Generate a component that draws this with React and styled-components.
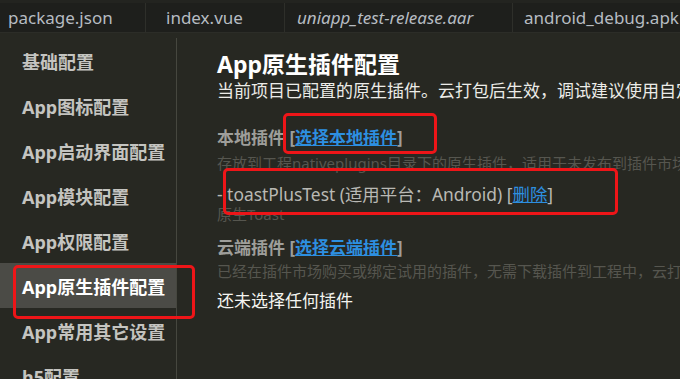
import React from 'react'
import styled, { createGlobalStyle } from 'styled-components'

const GlobalStyle = createGlobalStyle`
	html, body {
		margin: 0;
		padding: 0;
		background: #272822;
		overflow: hidden;
	}
	body {
		font-family: "Noto Sans", "Noto Sans CJK SC", sans-serif;
	}
`

const Page = styled.div`
	width: 680px;
	height: 379px;
	display: flex;
	flex-direction: column;
	background: #272822;
	overflow: hidden;
`

const TabBar = styled.div`
	flex: none;
	height: 33px;
	display: flex;
	background: #1e1f1c;
	border-top: 3px solid #232420;
	border-bottom: 1px solid #2c2d28;
	box-sizing: border-box;
	margin-left: -12px;
`

const Tab = styled.div`
	flex: none;
	width: ${props => props.$width}px;
	padding-left: ${props => props.$pad}px;
	box-sizing: border-box;
	border-right: 1px solid #2e2f2a;
	color: #b6bcc2;
	font-size: 17px;
	line-height: 29px;
	font-style: ${props => props.$italic ? 'italic' : 'normal'};
	white-space: nowrap;
	overflow: hidden;
`

const Body = styled.div`
	flex: 1;
	display: flex;
	padding-top: 5px;
	min-height: 0;
`

const Sidebar = styled.div`
	flex: none;
	width: 176px;
	border-right: 1px solid #46473f;
	display: flex;
	flex-direction: column;
	position: relative;
	z-index: 1;
`

const MenuItem = styled.div`
	position: relative;
	height: 45px;
	flex: none;
	padding-left: 22px;
	display: flex;
	align-items: center;
	font-size: 18px;
	font-weight: bold;
	white-space: nowrap;
	color: ${props => props.$active ? '#ffffff' : '#c4c4c0'};
	background: ${props => props.$active ? '#4b4b46' : 'transparent'};
`

const Mark = styled.div`
	position: absolute;
	left: ${props => props.$left}px;
	top: ${props => props.$top}px;
	width: ${props => props.$w}px;
	height: ${props => props.$h}px;
	border: 3px solid #ee1518;
	border-radius: 5px;
	box-sizing: border-box;
	pointer-events: none;
`

const Content = styled.div`
	flex: 1;
	position: relative;
	padding: 12px 0 0 40px;
	white-space: nowrap;
	overflow: hidden;
`

const Title = styled.div`
	font-size: 23px;
	font-weight: bold;
	line-height: 29px;
	color: #ffffff;
`

const Intro = styled.div`
	font-size: 17px;
	line-height: 23px;
	color: #ecece8;
`

const SectionHead = styled.div`
	margin-top: ${props => props.$gap}px;
	font-size: 17px;
	font-weight: bold;
	line-height: 24px;
	color: #9e9e9a;
`

const Link = styled.a`
	color: #2d8fe0;
	text-decoration: underline;
	cursor: pointer;
`

const Hint = styled.div`
	font-size: 15px;
	line-height: ${props => props.$lh || 22}px;
	color: #56564f;
	height: ${props => props.$lh || 22}px;
	overflow: hidden;
`

const PluginRow = styled.div`
	margin-top: 7px;
	font-size: 17.4px;
	line-height: 22px;
	color: #b9b9b4;
`

const Empty = styled.div`
	margin-top: 7px;
	font-size: 17px;
	line-height: 24px;
	color: #f4f4f0;
`

const tabs = [
	{ name: 'package.json', width: 158, pad: 20 },
	{ name: 'index.vue', width: 139, pad: 20 },
	{ name: 'uniapp_test-release.aar', width: 228, pad: 12, italic: true },
	{ name: 'android_debug.apk', width: 180, pad: 11 },
]

const menu = [
	'基础配置',
	'App图标配置',
	'App启动界面配置',
	'App模块配置',
	'App权限配置',
	'App原生插件配置',
	'App常用其它设置',
	'h5配置',
]

const App = () => {
	return (
		<Page>
			<GlobalStyle />
			<TabBar>
				{tabs.map(t => (
					<Tab key={t.name} $width={t.width} $pad={t.pad} $italic={t.italic}>{t.name}</Tab>
				))}
			</TabBar>
			<Body>
				<Sidebar>
					{menu.map((m, i) => (
						<MenuItem key={m} $active={i === 5}>
							{m}
							{i === 5 && <Mark $left={13} $top={2} $w={182} $h={54} />}
						</MenuItem>
					))}
				</Sidebar>
				<Content>
					<Title>App原生插件配置</Title>
					<Intro>当前项目已配置的原生插件。云打包后生效，调试建议使用自定义基座</Intro>
					<SectionHead $gap={24}>本地插件 [<Link>选择本地插件</Link>]</SectionHead>
					<Hint $lh={26}>存放到工程nativeplugins目录下的原生插件，适用于未发布到插件市场的插件</Hint>
					<PluginRow>- toastPlusTest (适用平台：Android) [<Link>删除</Link>]</PluginRow>
					<Hint $lh={18}>原生Toast</Hint>
					<SectionHead $gap={13}>云端插件 [<Link>选择云端插件</Link>]</SectionHead>
					<Hint>已经在插件市场购买或绑定试用的插件，无需下载插件到工程中，云打包时生效</Hint>
					<Empty>还未选择任何插件</Empty>
					<Mark $left={106} $top={75} $w={154} $h={41} />
					<Mark $left={46} $top={130} $w={395} $h={47} />
				</Content>
			</Body>
		</Page>
	)
}

export default App
